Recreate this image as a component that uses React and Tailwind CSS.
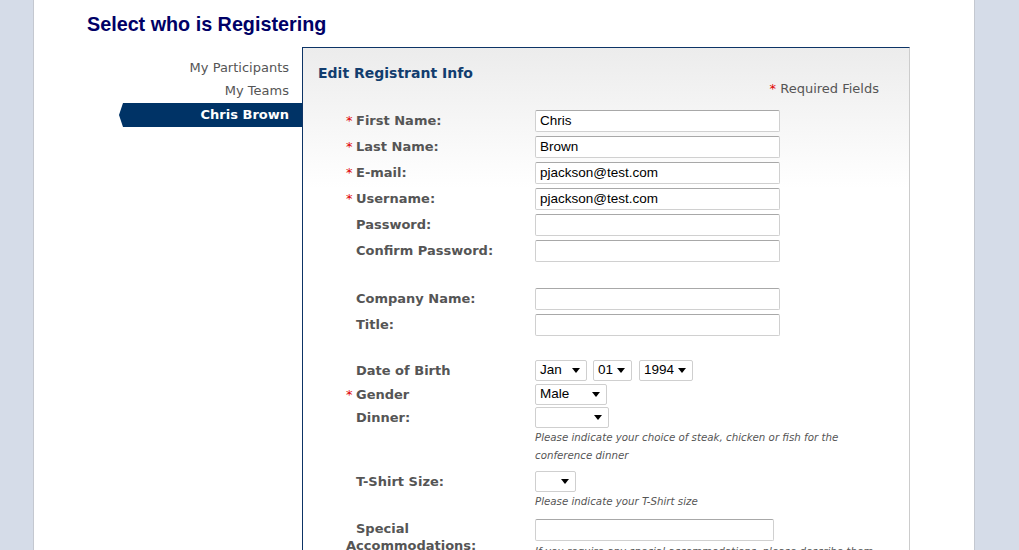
import React from "react";

const verdana = "font-['DejaVu_Sans',Verdana,sans-serif]";
const arial = "font-['Liberation_Sans',Arial,sans-serif]";

const Star = ({ on }) => (
  <span className={`inline-block w-[10px] text-[#e00000] font-normal ${on ? "" : "invisible"}`}>*</span>
);

const Label = ({ req, children, className = "" }) => (
  <div className={`w-[189px] shrink-0 text-[13px] font-bold text-[#555555] ${className}`}>
    <Star on={req} />
    {children}
  </div>
);

const TextRow = ({ label, req, value, className = "" }) => (
  <div className={`flex items-center h-[22px] ${className}`}>
    <Label req={req}>{label}</Label>
    <div
      className={`w-[245px] h-[22px] bg-white border border-[#d0d0d0] border-t-[#a8a8a8] rounded-[2px] px-[4px] flex items-center text-[13.5px] text-black ${arial}`}
    >
      {value}
    </div>
  </div>
);

const Select = ({ value, w, className = "" }) => (
  <div
    className={`h-[21px] bg-white border border-[#cfcfcf] rounded-[2px] flex items-center justify-between pl-[4px] pr-[6px] text-[13.5px] text-black ${arial} ${className}`}
    style={{ width: w }}
  >
    <span>{value}</span>
    <svg width="8" height="5" viewBox="0 0 8 5">
      <path d="M0 0h8L4 5z" fill="#000" />
    </svg>
  </div>
);

const Hint = ({ children }) => (
  <div className={`ml-[189px] w-[350px] text-[10.25px] italic leading-[18px] text-[#555555] ${verdana}`}>
    {children}
  </div>
);

export default function App() {
  return (
    <div className={`min-h-[550px] h-[550px] overflow-hidden bg-[#d5dce8] ${verdana}`}>
      <div className="ml-[33px] w-[942px] h-full bg-white border-l border-r border-[#c4c8d0]">
        <h1 className={`pl-[53px] pt-[10px] h-[47px] text-[19.75px] font-bold text-[#000066] ${arial}`}>
          Select who is Registering
        </h1>

        <div className="flex">
          {/* side nav */}
          <div className="w-[268px] shrink-0 pt-[9px] text-[13px] text-[#555555]">
            <div className="pr-[13px] text-right leading-[23px]">My Participants</div>
            <div className="pr-[13px] text-right leading-[23px]">My Teams</div>
            <div className="ml-[85px] mt-[1px] h-[24px] bg-[#003366] pr-[13px] flex items-center justify-end font-bold text-white [clip-path:polygon(4px_0,100%_0,100%_100%,4px_100%,0_50%)]">
              Chris Brown
            </div>
          </div>

          {/* form panel */}
          <div className="w-[608px] h-[520px] border-t border-l border-[#0d3466] border-r border-r-[#cccccc] bg-[linear-gradient(to_bottom,#ececec,#ffffff_140px)]">
            <div className="pl-[15px] pt-[15px] text-[14px] font-bold text-[#123d6e] leading-[20px]">
              Edit Registrant Info
            </div>
            <div className="pr-[30px] text-right text-[13px] text-[#555555] leading-[16px] -mt-[2px]">
              <span className="text-[#e00000]">*</span> Required Fields
            </div>

            <div className="pl-[43px] mt-[13px] flex flex-col">
              <TextRow label="First Name:" req value="Chris" />
              <TextRow label="Last Name:" req value="Brown" className="mt-[4px]" />
              <TextRow label="E-mail:" req value="pjackson@test.com" className="mt-[4px]" />
              <TextRow label="Username:" req value="pjackson@test.com" className="mt-[4px]" />
              <TextRow label="Password:" className="mt-[4px]" />
              <TextRow label="Confirm Password:" className="mt-[4px]" />

              <TextRow label="Company Name:" className="mt-[26px]" />
              <TextRow label="Title:" className="mt-[4px]" />

              <div className="flex items-center mt-[24px]">
                <Label>Date of Birth</Label>
                <Select value="Jan" w={52} />
                <Select value="01" w={39} className="ml-[6px]" />
                <Select value="1994" w={54} className="ml-[7px]" />
              </div>
              <div className="flex items-center mt-[3px]">
                <Label req>Gender</Label>
                <Select value="Male" w={72} />
              </div>
              <div className="flex items-center mt-[2px]">
                <Label>Dinner:</Label>
                <Select value="" w={74} />
              </div>
              <Hint>Please indicate your choice of steak, chicken or fish for the conference dinner</Hint>

              <div className="flex items-center mt-[7px]">
                <Label>T-Shirt Size:</Label>
                <Select value="" w={41} />
              </div>
              <Hint>Please indicate your T-Shirt size</Hint>

              <div className="flex items-start mt-[9px]">
                <Label className="leading-[17px] pt-[1px] pr-[10px]">Special Accommodations:</Label>
                <div>
                  <div className="w-[239px] h-[22px] bg-white border border-[#d0d0d0] border-t-[#a8a8a8] rounded-[2px]" />
                  <div className={`w-[350px] mt-[1px] text-[10.25px] italic leading-[18px] text-[#555555] ${verdana}`}>
                    If you require any special accommodations, please describe them
                  </div>
                </div>
              </div>
            </div>
          </div>
        </div>
      </div>
    </div>
  );
}
